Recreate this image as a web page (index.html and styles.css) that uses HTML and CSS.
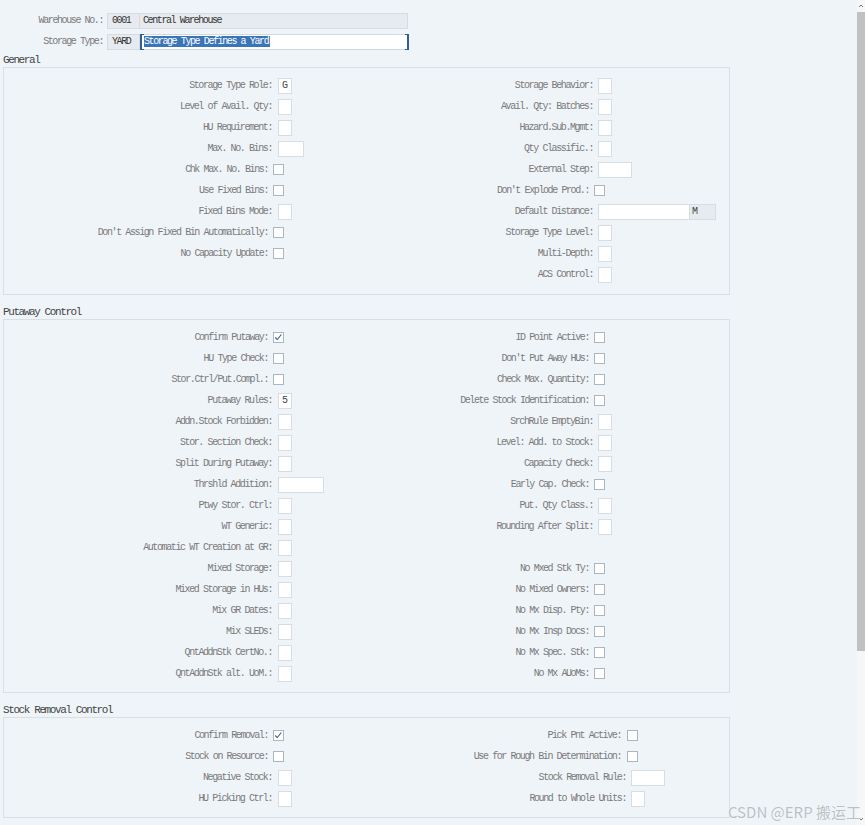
FILE: index.html
```html
<!DOCTYPE html>
<html>
<head>
<meta charset="utf-8">
<link rel="stylesheet" href="styles.css">
</head>
<body>
<div class="app">
  <div class="main">
    <div class="header">
      <div class="hrow"><span class="hlabel">Warehouse No.:</span><span class="hf ro w33">0001</span><span class="hf ro wdesc">Central Warehouse</span></div>
      <div class="hrow"><span class="hlabel">Storage Type:</span><span class="hf ro w33">YARD</span><span class="hf focus wdesc2"><span class="sel">Storage Type Defines a Yard</span></span></div>
    </div>

    <div class="title first">General</div>
    <section class="box gen">
      <div class="col left">
        <div class="row"><span class="lbl">Storage Type Role:</span><span class="inp">G</span></div>
        <div class="row"><span class="lbl">Level of Avail. Qty:</span><span class="inp"></span></div>
        <div class="row"><span class="lbl">HU Requirement:</span><span class="inp"></span></div>
        <div class="row"><span class="lbl">Max. No. Bins:</span><span class="inp w26"></span></div>
        <div class="row cb"><span class="lbl">Chk Max. No. Bins:</span><span class="chk"></span></div>
        <div class="row cb"><span class="lbl">Use Fixed Bins:</span><span class="chk"></span></div>
        <div class="row"><span class="lbl">Fixed Bins Mode:</span><span class="inp"></span></div>
        <div class="row cb"><span class="lbl">Don't Assign Fixed Bin Automatically:</span><span class="chk"></span></div>
        <div class="row cb"><span class="lbl">No Capacity Update:</span><span class="chk"></span></div>
      </div>
      <div class="col right">
        <div class="row"><span class="lbl">Storage Behavior:</span><span class="inp"></span></div>
        <div class="row"><span class="lbl">Avail. Qty: Batches:</span><span class="inp"></span></div>
        <div class="row"><span class="lbl">Hazard.Sub.Mgmt:</span><span class="inp"></span></div>
        <div class="row"><span class="lbl">Qty Classific.:</span><span class="inp"></span></div>
        <div class="row"><span class="lbl">External Step:</span><span class="inp w34"></span></div>
        <div class="row cb"><span class="lbl">Don't Explode Prod.:</span><span class="chk"></span></div>
        <div class="row"><span class="lbl">Default Distance:</span><span class="pair"><span class="inp w92"></span><span class="unit">M</span></span></div>
        <div class="row"><span class="lbl">Storage Type Level:</span><span class="inp"></span></div>
        <div class="row"><span class="lbl">Multi-Depth:</span><span class="inp"></span></div>
        <div class="row"><span class="lbl">ACS Control:</span><span class="inp"></span></div>
      </div>
    </section>

    <div class="title">Putaway Control</div>
    <section class="box">
      <div class="col left">
        <div class="row cb"><span class="lbl">Confirm Putaway:</span><span class="chk"><svg viewBox="0 0 11 11" width="9" height="9"><polyline points="1.5,5.5 4,8 9,1.8" fill="none" stroke="#2b5e94" stroke-width="1.3"/></svg></span></div>
        <div class="row cb"><span class="lbl">HU Type Check:</span><span class="chk"></span></div>
        <div class="row cb"><span class="lbl">Stor.Ctrl/Put.Compl.:</span><span class="chk"></span></div>
        <div class="row"><span class="lbl">Putaway Rules:</span><span class="inp">5</span></div>
        <div class="row"><span class="lbl">Addn.Stock Forbidden:</span><span class="inp"></span></div>
        <div class="row"><span class="lbl">Stor. Section Check:</span><span class="inp"></span></div>
        <div class="row"><span class="lbl">Split During Putaway:</span><span class="inp"></span></div>
        <div class="row"><span class="lbl">Thrshld Addition:</span><span class="inp w46"></span></div>
        <div class="row"><span class="lbl">Ptwy Stor. Ctrl:</span><span class="inp"></span></div>
        <div class="row"><span class="lbl">WT Generic:</span><span class="inp"></span></div>
        <div class="row"><span class="lbl">Automatic WT Creation at GR:</span><span class="inp"></span></div>
        <div class="row"><span class="lbl">Mixed Storage:</span><span class="inp"></span></div>
        <div class="row"><span class="lbl">Mixed Storage in HUs:</span><span class="inp"></span></div>
        <div class="row"><span class="lbl">Mix GR Dates:</span><span class="inp"></span></div>
        <div class="row"><span class="lbl">Mix SLEDs:</span><span class="inp"></span></div>
        <div class="row"><span class="lbl">QntAddnStk CertNo.:</span><span class="inp"></span></div>
        <div class="row"><span class="lbl">QntAddnStk alt. UoM.:</span><span class="inp"></span></div>
      </div>
      <div class="col right">
        <div class="row cb"><span class="lbl">ID Point Active:</span><span class="chk"></span></div>
        <div class="row cb"><span class="lbl">Don't Put Away HUs:</span><span class="chk"></span></div>
        <div class="row cb"><span class="lbl">Check Max. Quantity:</span><span class="chk"></span></div>
        <div class="row cb"><span class="lbl">Delete Stock Identification:</span><span class="chk"></span></div>
        <div class="row"><span class="lbl">SrchRule EmptyBin:</span><span class="inp"></span></div>
        <div class="row"><span class="lbl">Level: Add. to Stock:</span><span class="inp"></span></div>
        <div class="row"><span class="lbl">Capacity Check:</span><span class="inp"></span></div>
        <div class="row cb"><span class="lbl">Early Cap. Check:</span><span class="chk"></span></div>
        <div class="row"><span class="lbl">Put. Qty Class.:</span><span class="inp"></span></div>
        <div class="row"><span class="lbl">Rounding After Split:</span><span class="inp"></span></div>
        <div class="row"></div>
        <div class="row cb"><span class="lbl">No Mxed Stk Ty:</span><span class="chk"></span></div>
        <div class="row cb"><span class="lbl">No Mixed Owners:</span><span class="chk"></span></div>
        <div class="row cb"><span class="lbl">No Mx Disp. Pty:</span><span class="chk"></span></div>
        <div class="row cb"><span class="lbl">No Mx Insp Docs:</span><span class="chk"></span></div>
        <div class="row cb"><span class="lbl">No Mx Spec. Stk:</span><span class="chk"></span></div>
        <div class="row cb"><span class="lbl">No Mx AUoMs:</span><span class="chk"></span></div>
      </div>
    </section>

    <div class="title">Stock Removal Control</div>
    <section class="box sr">
      <div class="col left">
        <div class="row cb"><span class="lbl">Confirm Removal:</span><span class="chk"><svg viewBox="0 0 11 11" width="9" height="9"><polyline points="1.5,5.5 4,8 9,1.8" fill="none" stroke="#2b5e94" stroke-width="1.3"/></svg></span></div>
        <div class="row cb"><span class="lbl">Stock on Resource:</span><span class="chk"></span></div>
        <div class="row"><span class="lbl">Negative Stock:</span><span class="inp"></span></div>
        <div class="row"><span class="lbl">HU Picking Ctrl:</span><span class="inp"></span></div>
      </div>
      <div class="col right">
        <div class="row cb"><span class="lbl">Pick Pnt Active:</span><span class="chk"></span></div>
        <div class="row cb"><span class="lbl">Use for Rough Bin Determination:</span><span class="chk"></span></div>
        <div class="row"><span class="lbl">Stock Removal Rule:</span><span class="inp w34"></span></div>
        <div class="row"><span class="lbl">Round to Whole Units:</span><span class="inp"></span></div>
      </div>
    </section>
  </div>

  <div class="scrollbar">
    <div class="arrow"><svg viewBox="0 0 8 10" width="8" height="10"><polyline points="2,6 4,4 6,6" fill="none" stroke="#777" stroke-width="1"/></svg></div>
    <div class="thumb"></div>
    <div class="track"></div>
    <div class="arrow"><svg viewBox="0 0 8 10" width="8" height="10"><polyline points="2,4 4,6 6,4" fill="none" stroke="#777" stroke-width="1"/></svg></div>
  </div>

  <div class="watermark">CSDN @ERP 搬运工</div>
</div>
</body>
</html>
```

FILE: styles.css
```css
html, body {
  margin: 0;
  padding: 0;
}
body {
  background: #eff4f9;
  font-family: "Liberation Mono", "DejaVu Sans Mono", monospace;
}
.app {
  display: flex;
  height: 825px;
  overflow: hidden;
  position: relative;
}
.main {
  flex: 1;
  padding-top: 13px;
}

/* header */
.hrow {
  display: flex;
  height: 16px;
  margin-bottom: 5px;
}
.hrow + .hrow {
  margin-top: 1px;
  margin-bottom: 4px;
}
.hlabel {
  width: 107px;
  box-sizing: border-box;
  padding-right: 4px;
  text-align: right;
  font-size: 10px;
  letter-spacing: -1.4px;
  line-height: 16px;
  color: #7a7a7a;
  white-space: nowrap;
}
.hf {
  height: 16px;
  box-sizing: border-box;
  border: 1px solid #d6dbe1;
  font-size: 10px;
  letter-spacing: -1.4px;
  line-height: 14px;
  color: #333;
  padding-left: 3px;
  white-space: nowrap;
}
.ro {
  background: #e7ebef;
}
.w33 { width: 33px; padding-left: 4px; }
.wdesc { width: 268px; border-left: none; }
.wdesc2 { width: 269px; }
.focus {
  background: #fff;
  position: relative;
  border-color: #d3d9e0;
}
.focus::before,
.focus::after {
  content: "";
  position: absolute;
  top: -1px;
  bottom: -1px;
  width: 2px;
  border-top: 1px solid #2f5f96;
  border-bottom: 1px solid #2f5f96;
}
.focus::before {
  left: -1px;
  border-left: 2px solid #2f5f96;
}
.focus::after {
  right: -1px;
  border-right: 2px solid #2f5f96;
}
.sel {
  display: inline-block;
  background: #3a76b7;
  color: #fff;
  line-height: 11px;
  padding-right: 2px;
  vertical-align: 0;
}

/* titles */
.title {
  font-size: 11px;
  letter-spacing: -1.4px;
  line-height: 13px;
  color: #444;
  margin: 11px 0 0 3px;
}
.title.first {
  margin-top: 2px;
}

/* section boxes */
.box {
  margin-left: 3px;
  width: 727px;
  box-sizing: border-box;
  border: 1px solid #d9dfe6;
  display: grid;
  grid-template-columns: 430px 1fr;
  padding: 7px 0 8px;
}
.box.gen {
  padding-bottom: 9px;
}
.row {
  display: grid;
  height: 21px;
  align-items: center;
  justify-items: start;
}
.left .row {
  grid-template-columns: 268px auto;
  column-gap: 6px;
}
.right .row {
  grid-template-columns: 159px auto;
  column-gap: 5px;
}
.sr .right .row {
  grid-template-columns: 192px auto;
}
.lbl {
  justify-self: stretch;
  text-align: right;
  font-size: 10px;
  letter-spacing: -1.4px;
  color: #7a7a7a;
  white-space: nowrap;
}
.cb .lbl {
  padding-right: 4px;
}
.left .cb .chk { margin-left: -5px; }
.right .cb .chk { margin-left: -4px; }
.sr .right .cb .lbl { padding-right: 5px; }

.inp {
  display: block;
  width: 14px;
  height: 16px;
  box-sizing: border-box;
  background: #fff;
  border: 1px solid #d7dde4;
  font-size: 10px;
  line-height: 14px;
  padding-left: 3px;
  color: #444;
}
.w26 { width: 26px; }
.w34 { width: 34px; }
.w46 { width: 46px; }
.w92 { width: 92px; }
.pair {
  display: flex;
}
.unit {
  width: 26px;
  height: 16px;
  box-sizing: border-box;
  background: #e7ebef;
  border: 1px solid #d7dde4;
  border-left: none;
  font-size: 10px;
  line-height: 14px;
  padding-left: 2px;
  color: #444;
}
.chk {
  display: flex;
  align-items: center;
  justify-content: center;
  width: 11px;
  height: 11px;
  box-sizing: border-box;
  background: #fff;
  border: 1px solid #adb5be;
}

/* scrollbar */
.scrollbar {
  width: 8px;
  display: flex;
  flex-direction: column;
  background: #f7f7f7;
}
.arrow {
  height: 12px;
  display: flex;
  align-items: center;
  justify-content: center;
}
.thumb {
  height: 639px;
  background: #c1c1c1;
}
.track {
  flex: 1;
}

/* watermark */
.watermark {
  position: absolute;
  right: 4px;
  bottom: 4px;
  font-family: "Noto Sans CJK SC", "Noto Sans", sans-serif;
  font-size: 15px;
  line-height: 18px;
  color: #b9bfc6;
  text-shadow: 0 0 1px #fff, 0 0 1px #fff;
  white-space: nowrap;
}
```
